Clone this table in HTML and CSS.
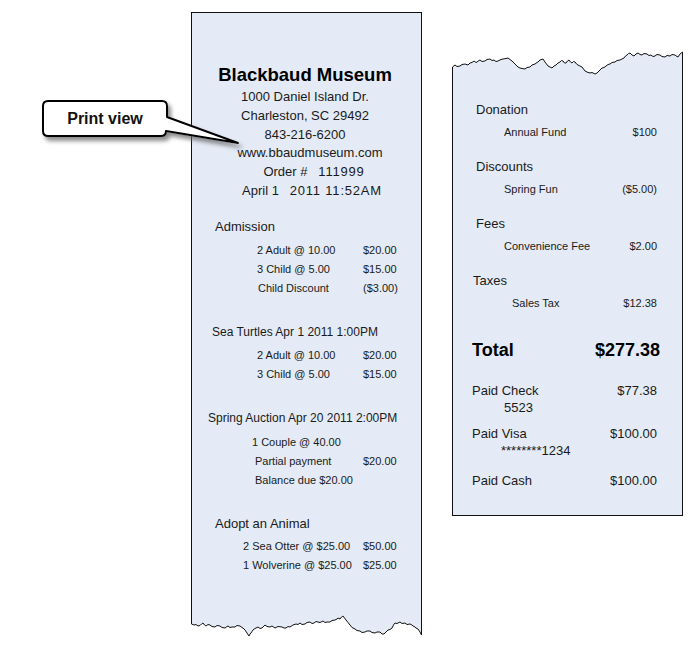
FILE: index.html
```html
<!DOCTYPE html>
<html>
<head>
<meta charset="utf-8">
<title>Receipt print view</title>
<link rel="stylesheet" href="styles.css">
</head>
<body>
<div class="page">
  <div class="receipt">
    <div class="r-body r-body-left">
      <div class="title">Blackbaud Museum</div>
      <div class="addr">
        <div>1000 Daniel Island Dr.</div>
        <div>Charleston, SC 29492</div>
        <div>843-216-6200</div>
        <div class="sh1">www.bbaudmuseum.com</div>
        <div class="sh2">Order #&nbsp;&nbsp; <span class="wide">111999</span></div>
        <div class="sh3">April 1 &nbsp; <span class="wide">2011 11:52AM</span></div>
      </div>

      <section class="sec sec-first">
        <div class="sec-h big pl-23">Admission</div>
        <div class="items">
          <div class="row"><span class="pl-65">2 Adult @ 10.00</span><span>$20.00</span></div>
          <div class="row"><span class="pl-65">3 Child @ 5.00</span><span>$15.00</span></div>
          <div class="row"><span class="pl-66">Child Discount</span><span>($3.00)</span></div>
        </div>
      </section>

      <section class="sec">
        <div class="sec-h pl-20">Sea Turtles Apr 1 2011 1:00PM</div>
        <div class="items">
          <div class="row"><span class="pl-65">2 Adult @ 10.00</span><span>$20.00</span></div>
          <div class="row"><span class="pl-65">3 Child @ 5.00</span><span>$15.00</span></div>
        </div>
      </section>

      <section class="sec">
        <div class="sec-h pl-16">Spring Auction Apr 20 2011 2:00PM</div>
        <div class="items">
          <div class="row"><span class="pl-60">1 Couple @ 40.00</span><span></span></div>
          <div class="row"><span class="pl-63">Partial payment</span><span>$20.00</span></div>
          <div class="row"><span class="pl-63">Balance due $20.00</span><span></span></div>
        </div>
      </section>

      <section class="sec sec-last">
        <div class="sec-h big pl-23">Adopt an Animal</div>
        <div class="items">
          <div class="row"><span class="pl-51">2 Sea Otter @ $25.00</span><span>$50.00</span></div>
          <div class="row"><span class="pl-51">1 Wolverine @ $25.00</span><span>$25.00</span></div>
        </div>
      </section>
    </div>
    <svg class="torn" width="231" height="26" viewBox="0 0 231 26">
      <path class="torn-fill" d="M0.5,0 L0.5,12 L3,13 L5,12.5 L7,14 L9,13.5 L10.5,12 L12,11 L13.5,13 L15,14 L17,12.5 L19,13 L21,14.5 L24,15 L26,13.5 L29,14 L31,15.5 L34,16 L36,14.5 L37,14 L39,15.5 L41,15 L44,15 L46,13.5 L49,14 L51,15.5 L52,16 L54,18 L56,21 L58,24 L59,22 L60,21 L61,19.5 L62,18 L64,16.5 L67,15 L69,16.5 L71,16 L73,14 L74,13 L76,14.5 L79,15 L81,14 L84,16 L87,14.5 L91,15 L93,16 L95,16 L97,14.5 L99,15 L102,13 L105,12 L107,12.5 L109,11 L111,12.5 L114,12 L116,10.5 L119,10 L121,11.5 L123,11 L125,9.5 L127,10 L129,10.5 L132,9 L134,10.5 L136,10 L139,10 L141,8.5 L144,8 L146,7 L147,6 L149,7 L150.5,5 L152,4 L153.5,6 L155,8 L157,10.5 L159,13 L161,15.5 L164,17 L166,18.5 L169,19 L171,20.5 L174,20 L176,19 L179,19 L181,20.5 L184,21 L186,20 L189,20 L191,22 L193,22 L195,20 L197,18 L199,17.5 L201,16 L202.5,13 L204,11 L206,11.5 L209,10 L211,11.5 L214,11 L216,12.5 L219,12 L221,13 L222,14 L224,15 L225,16 L227,17 L229,20 L230.5,23 L230.5,0 Z"/>
      <path class="torn-line" d="M0.5,0 L0.5,12 L3,13 L5,12.5 L7,14 L9,13.5 L10.5,12 L12,11 L13.5,13 L15,14 L17,12.5 L19,13 L21,14.5 L24,15 L26,13.5 L29,14 L31,15.5 L34,16 L36,14.5 L37,14 L39,15.5 L41,15 L44,15 L46,13.5 L49,14 L51,15.5 L52,16 L54,18 L56,21 L58,24 L59,22 L60,21 L61,19.5 L62,18 L64,16.5 L67,15 L69,16.5 L71,16 L73,14 L74,13 L76,14.5 L79,15 L81,14 L84,16 L87,14.5 L91,15 L93,16 L95,16 L97,14.5 L99,15 L102,13 L105,12 L107,12.5 L109,11 L111,12.5 L114,12 L116,10.5 L119,10 L121,11.5 L123,11 L125,9.5 L127,10 L129,10.5 L132,9 L134,10.5 L136,10 L139,10 L141,8.5 L144,8 L146,7 L147,6 L149,7 L150.5,5 L152,4 L153.5,6 L155,8 L157,10.5 L159,13 L161,15.5 L164,17 L166,18.5 L169,19 L171,20.5 L174,20 L176,19 L179,19 L181,20.5 L184,21 L186,20 L189,20 L191,22 L193,22 L195,20 L197,18 L199,17.5 L201,16 L202.5,13 L204,11 L206,11.5 L209,10 L211,11.5 L214,11 L216,12.5 L219,12 L221,13 L222,14 L224,15 L225,16 L227,17 L229,20 L230.5,23 L230.5,0"/>
    </svg>
  </div>

  <div class="receipt receipt-right">
    <svg class="torn" width="231" height="26" viewBox="0 0 231 26">
      <path class="torn-fill" d="M0.5,26 L0.5,17 L3,15 L5,16.5 L8,16 L10,14.5 L13,14 L16,15 L18,13 L20,12.5 L22,11 L24,12.5 L25,12 L27,10.5 L28,10 L30,11.5 L33,11 L35,9.5 L38,9 L40,10.5 L42,10 L44,11.5 L46,11 L49,9.5 L51,9 L54,8.5 L56,8 L58,9.5 L60,11 L62,13 L64,15 L66,17 L68,18 L70,18.5 L73,19 L75,17.5 L78,17 L80,15 L83,14 L85,12.5 L86,12 L88,10 L91,9 L93,12 L96,16 L98,17 L100,18 L102,16 L104,15 L106,13 L108,12 L109.5,10.5 L111,11 L112.5,13 L114,13 L115.5,11 L117,10 L118.5,12 L120,13 L121.5,11.5 L123,12 L124.5,14 L126,15 L128,16 L130,17 L131.5,19 L133,21 L135,22 L138,23 L140,22.5 L143,24 L145,23 L146,22 L148,20 L150,18 L152,17.5 L154,16 L156,14.5 L158,14 L160,12.5 L163,12 L165,10.5 L168,10 L170,9 L172,8 L173.5,6 L175,5 L176.5,3.5 L178,3 L180,5 L182,6 L184,4 L186,3 L188,4.5 L190,5 L192,3.5 L195,4 L197,5.5 L199,5 L201,6.5 L203,6 L205,4.5 L208,5 L210,6.5 L213,7 L215,5.5 L218,6 L220,4.5 L223,5 L225,6.5 L226,7 L228,4 L230.5,2 L230.5,26 Z"/>
      <path class="torn-line" d="M0.5,26 L0.5,17 L3,15 L5,16.5 L8,16 L10,14.5 L13,14 L16,15 L18,13 L20,12.5 L22,11 L24,12.5 L25,12 L27,10.5 L28,10 L30,11.5 L33,11 L35,9.5 L38,9 L40,10.5 L42,10 L44,11.5 L46,11 L49,9.5 L51,9 L54,8.5 L56,8 L58,9.5 L60,11 L62,13 L64,15 L66,17 L68,18 L70,18.5 L73,19 L75,17.5 L78,17 L80,15 L83,14 L85,12.5 L86,12 L88,10 L91,9 L93,12 L96,16 L98,17 L100,18 L102,16 L104,15 L106,13 L108,12 L109.5,10.5 L111,11 L112.5,13 L114,13 L115.5,11 L117,10 L118.5,12 L120,13 L121.5,11.5 L123,12 L124.5,14 L126,15 L128,16 L130,17 L131.5,19 L133,21 L135,22 L138,23 L140,22.5 L143,24 L145,23 L146,22 L148,20 L150,18 L152,17.5 L154,16 L156,14.5 L158,14 L160,12.5 L163,12 L165,10.5 L168,10 L170,9 L172,8 L173.5,6 L175,5 L176.5,3.5 L178,3 L180,5 L182,6 L184,4 L186,3 L188,4.5 L190,5 L192,3.5 L195,4 L197,5.5 L199,5 L201,6.5 L203,6 L205,4.5 L208,5 L210,6.5 L213,7 L215,5.5 L218,6 L220,4.5 L223,5 L225,6.5 L226,7 L228,4 L230.5,2 L230.5,26"/>
    </svg>
    <div class="r-body r-body-right">
      <section>
        <div class="sec-h big pl-23">Donation</div>
        <div class="items"><div class="line"><span class="pl-51">Annual Fund</span><span>$100</span></div></div>
      </section>
      <section class="rsec">
        <div class="sec-h big pl-23">Discounts</div>
        <div class="items"><div class="line"><span class="pl-51">Spring Fun</span><span>($5.00)</span></div></div>
      </section>
      <section class="rsec">
        <div class="sec-h big pl-23">Fees</div>
        <div class="items"><div class="line"><span class="pl-51">Convenience Fee</span><span>$2.00</span></div></div>
      </section>
      <section class="rsec">
        <div class="sec-h big pl-20">Taxes</div>
        <div class="items"><div class="line"><span class="pl-59">Sales Tax</span><span>$12.38</span></div></div>
      </section>

      <div class="line total"><span class="pl-19">Total</span><span class="total-amt">$277.38</span></div>

      <div class="pay pay-first">
        <div class="line"><span class="pl-19">Paid Check</span><span>$77.38</span></div>
        <div class="pl-51">5523</div>
      </div>
      <div class="pay pay-mid">
        <div class="line"><span class="pl-19">Paid Visa</span><span>$100.00</span></div>
        <div class="pl-48">********1234</div>
      </div>
      <div class="pay pay-last">
        <div class="line"><span class="pl-19">Paid Cash</span><span>$100.00</span></div>
      </div>
    </div>
  </div>

  <div class="callout">
    <svg class="callout-shape" width="260" height="170" viewBox="0 0 260 170">
      <defs>
        <filter id="sh" x="-20%" y="-40%" width="150%" height="190%">
          <feDropShadow dx="3" dy="4" stdDeviation="2" flood-color="#666" flood-opacity="0.75"/>
        </filter>
      </defs>
      <path d="M48,101 H162 Q167,101 167,106 V117 L238,143 L166,131 Q166,136 161,136 H48 Q43,136 43,131 V106 Q43,101 48,101 Z" fill="#fff" stroke="#000" stroke-width="2" stroke-linejoin="round" filter="url(#sh)"/>
    </svg>
    <span class="callout-label">Print view</span>
  </div>
</div>
</body>
</html>
```

FILE: styles.css
```css
html, body {
  margin: 0;
  padding: 0;
  background: #fff;
}

body {
  font-family: "Liberation Sans", Arial, sans-serif;
  color: #1a1a1a;
}

.page {
  position: relative;
  box-sizing: border-box;
  width: 700px;
  height: 650px;
  padding: 12px 0 0 191px;
  display: flex;
  align-items: flex-start;
  gap: 30px;
}

.receipt {
  width: 231px;
  display: flex;
  flex-direction: column;
}

.receipt-right {
  margin-top: 38px;
}

.r-body {
  background: #e4ebf6;
  border: 1px solid #111;
}

.r-body-left {
  border-bottom: none;
  padding: 52px 0 36.5px;
}

.r-body-right {
  border-top: none;
  padding: 23.5px 25px 26.5px 0;
}

.torn {
  display: block;
}

.torn-fill {
  fill: #e4ebf6;
  stroke: none;
}

.torn-line {
  fill: none;
  stroke: #111;
  stroke-width: 1;
  stroke-linejoin: round;
}

.title {
  font-weight: bold;
  font-size: 18.5px;
  line-height: 20px;
  text-align: center;
  color: #000;
  margin-bottom: 3px;
  padding-right: 3px;
}

.addr {
  font-size: 13px;
  line-height: 18.8px;
  text-align: center;
  padding-right: 3px;
}

.addr .sh1 { padding-left: 10px; }
.addr .sh2 { padding-left: 18px; }
.addr .sh3 { padding-left: 14px; }

.wide { letter-spacing: 0.8px; }

.sec { margin-top: 25px; }
.sec-first { margin-top: 16.7px; }
.sec-last { margin-top: 24px; }

.sec-h {
  font-size: 12px;
  line-height: 19px;
}

.sec-h.big { font-size: 13px; }

.items {
  margin-top: 4.5px;
  font-size: 11px;
  line-height: 19px;
}

.row {
  display: grid;
  grid-template-columns: 171px auto;
}

.line {
  display: flex;
  justify-content: space-between;
}

.rsec { margin-top: 14.5px; }

.total {
  margin-top: 25px;
  font-size: 18px;
  line-height: 24px;
  font-weight: bold;
  color: #000;
}

.total-amt { margin-right: -3px; }

.pay {
  font-size: 13px;
  line-height: 17px;
}

.pay-first { margin-top: 19.5px; }
.pay-mid { margin-top: 9px; }
.pay-last { margin-top: 13px; }

.pl-16 { padding-left: 16px; }
.pl-19 { padding-left: 19px; }
.pl-20 { padding-left: 20px; }
.pl-23 { padding-left: 23px; }
.pl-48 { padding-left: 48px; }
.pl-51 { padding-left: 51px; }
.pl-59 { padding-left: 59px; }
.pl-60 { padding-left: 60px; }
.pl-63 { padding-left: 63px; }
.pl-65 { padding-left: 65px; }
.pl-66 { padding-left: 66px; }

.callout {
  position: absolute;
  left: 0;
  top: 0;
  width: 260px;
  height: 170px;
}

.callout-shape {
  position: absolute;
  left: 0;
  top: 0;
}

.callout-label {
  position: absolute;
  left: 43px;
  top: 101px;
  width: 124px;
  height: 35px;
  display: flex;
  align-items: center;
  justify-content: center;
  font-weight: bold;
  font-size: 16px;
  color: #111;
}
```
